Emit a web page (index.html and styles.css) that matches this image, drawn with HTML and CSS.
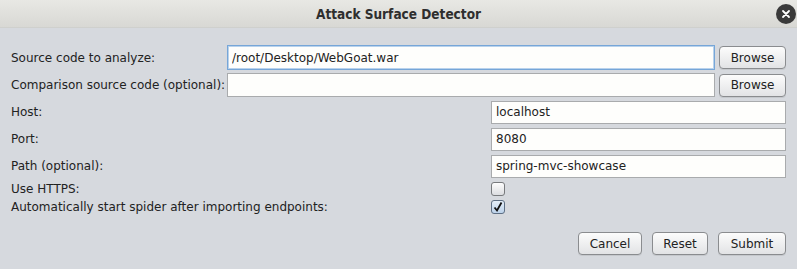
FILE: index.html
```html
<!DOCTYPE html>
<html lang="en">
<head>
    <meta charset="UTF-8">
    <title>Attack Surface Detector</title>
    <link rel="stylesheet" href="styles.css">
</head>
<body>

<div class="window">
    <div class="titlebar">
        <span class="title">Attack Surface Detector</span>
        <span class="close">
            <svg width="10" height="10" viewBox="0 0 10 10"><path d="M2 2 L8 8 M8 2 L2 8" stroke="#fff" stroke-width="1.8" stroke-linecap="round"/></svg>
        </span>
    </div>

    <form class="content">
        <!-- file pickers -->
        <div class="row file-row first">
            <label for="source">Source code to analyze:</label>
            <input type="text" id="source" class="focused" value="/root/Desktop/WebGoat.war">
            <button type="button">Browse</button>
        </div>
        <div class="row file-row">
            <label for="compare">Comparison source code (optional):</label>
            <input type="text" id="compare" value="">
            <button type="button">Browse</button>
        </div>

        <!-- connection -->
        <div class="row text-row">
            <label for="host">Host:</label>
            <input type="text" id="host" value="localhost">
        </div>
        <div class="row text-row">
            <label for="port">Port:</label>
            <input type="text" id="port" value="8080">
        </div>
        <div class="row text-row">
            <label for="path">Path (optional):</label>
            <input type="text" id="path" value="spring-mvc-showcase">
        </div>

        <!-- options -->
        <div class="check-row">
            <span class="check-label">Use HTTPS:</span>
            <span class="checkbox"></span>
        </div>
        <div class="check-row">
            <span class="check-label">Automatically start spider after importing endpoints:</span>
            <span class="checkbox checked">
                <svg width="12" height="12" viewBox="0 0 12 12"><path d="M2.5 6.5 L5 9.5 L9.5 1.5" fill="none" stroke="#111" stroke-width="1.8"/></svg>
            </span>
        </div>

        <div class="actions">
            <button type="button" class="btn-cancel">Cancel</button>
            <button type="button" class="btn-reset">Reset</button>
            <button type="button" class="btn-submit">Submit</button>
        </div>
    </form>
</div>

</body>
</html>
```

FILE: styles.css
```css
body {
    margin: 0;
    font-family: "DejaVu Sans", sans-serif;
    font-size: 12px;
    color: #222;
    background-color: #d6d9de;
}
.window {
    width: 797px;
    height: 269px;
    overflow: hidden;
}
.titlebar {
    position: relative;
    height: 28px;
    display: flex;
    align-items: center;
    justify-content: center;
    background: linear-gradient(#e8e8e4, #d8d8d4);
    border-bottom: 1px solid #cfd0cd;
    box-sizing: border-box;
}
.title {
    font-family: "DejaVu Sans Condensed", "DejaVu Sans", sans-serif;
    font-weight: bold;
    font-size: 13.5px;
    color: #2e2e2e;
}
.close {
    position: absolute;
    right: 1px;
    top: 4px;
    width: 20px;
    height: 20px;
    border-radius: 50%;
    background-color: #3a3a3a;
    display: flex;
    align-items: center;
    justify-content: center;
}
.content {
    padding: 17px 11px 0 11px;
}
.row {
    display: flex;
    align-items: center;
    height: 24px;
    margin-bottom: 3px;
}
.row.first {
    height: 25px;
}
.row label {
    white-space: nowrap;
}
.file-row label {
    width: 216px;
    flex: none;
}
.file-row input {
    flex: 1;
    height: 100%;
}
.file-row button {
    margin-left: 4px;
    width: 67px;
    height: 23px;
}
.text-row label {
    flex: 1;
}
.text-row input {
    width: 295px;
    height: 23px;
}
input[type="text"] {
    box-sizing: border-box;
    margin: 0;
    padding: 0 4px;
    font-family: "DejaVu Sans", sans-serif;
    font-size: 12px;
    color: #222;
    background-color: #fefefc;
    border: 1px solid #a9abad;
    outline: none;
}
input.focused {
    border: 1px solid #76a6d8;
    box-shadow: inset 0 0 0 1px #b9d2ec;
}
button {
    box-sizing: border-box;
    font-family: "DejaVu Sans", sans-serif;
    font-size: 12px;
    color: #222;
    padding: 0;
    border: 1px solid #8a8c8f;
    border-radius: 4px;
    background: linear-gradient(#fcfcfc, #e2e3e5);
    box-shadow: 0 1px 0 rgba(0, 0, 0, 0.08);
}
.check-row {
    display: flex;
    align-items: center;
    height: 15px;
    margin-bottom: 3px;
}
.check-label {
    width: 480px;
    flex: none;
}
.checkbox {
    box-sizing: border-box;
    width: 14px;
    height: 14px;
    border: 1px solid #787a7d;
    border-radius: 3px;
    background: linear-gradient(#fdfdfd, #dcdde0);
    display: flex;
    align-items: center;
    justify-content: center;
}
.checkbox.checked {
    background: linear-gradient(#e4eef8, #bcd2ea);
    border-color: #5e6f84;
}
.actions {
    display: flex;
    justify-content: flex-end;
    margin-top: 18px;
}
.actions button {
    height: 23px;
    margin-left: 10px;
}
.btn-cancel {
    width: 64px;
}
.btn-reset {
    width: 56px;
}
.btn-submit {
    width: 68px;
}
```
